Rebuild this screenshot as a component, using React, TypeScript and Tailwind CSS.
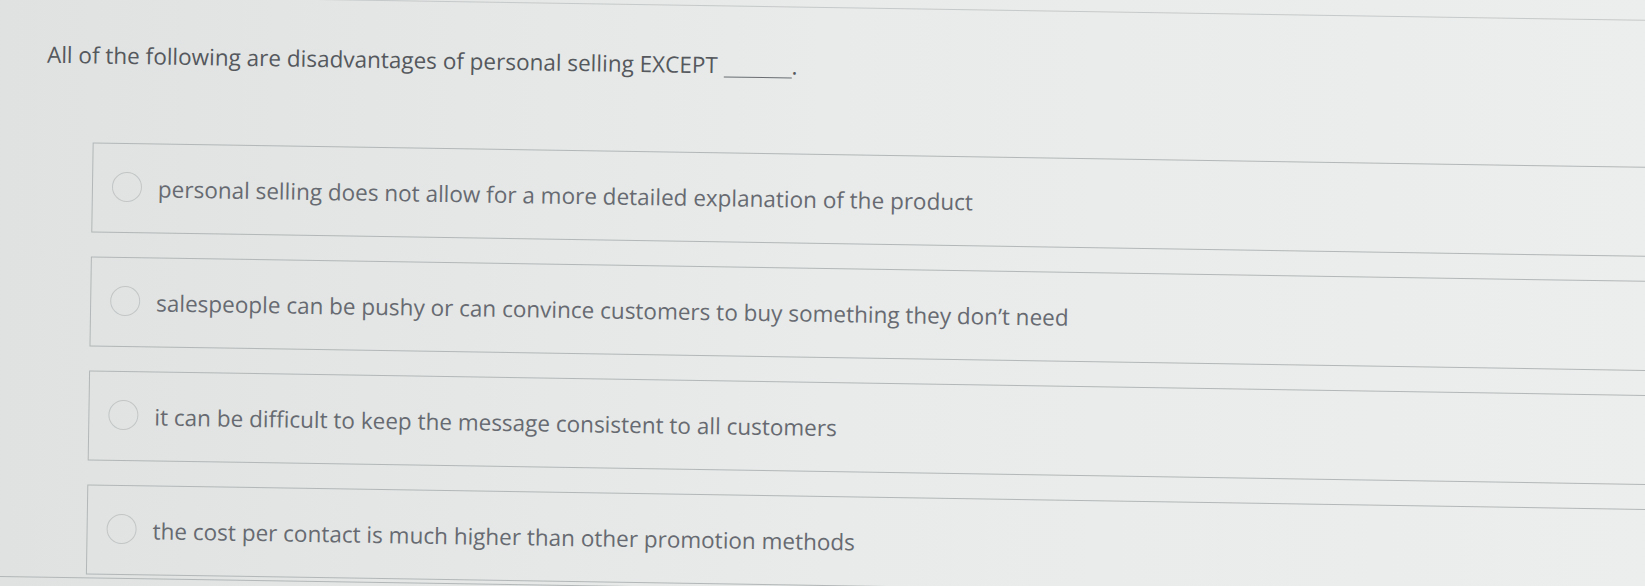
import React from 'react';

const options = [
  'personal selling does not allow for a more detailed explanation of the product',
  'salespeople can be pushy or can convince customers to buy something they don\u2019t need',
  'it can be difficult to keep the message consistent to all customers',
  'the cost per contact is much higher than other promotion methods',
];

const Option: React.FC<{ label: string }> = ({ label }) => (
  <div className="flex h-[90px] w-[1700px] items-center border-[1.5px] border-[#b3b7b7] pl-[19px]">
    <span className="mb-[2px] h-[30px] w-[30px] shrink-0 rounded-full border-[1.5px] border-[#c3c6c6]" />
    <span className="ml-[16px] mt-[2px] text-[22.5px] leading-[30px] text-[#676a71]">{label}</span>
  </div>
);

const App: React.FC = () => {
  return (
    <div
      className="h-[586px] w-full overflow-hidden bg-linear-to-r from-[#dfe2e1] via-[#e8ebea] to-[#eceeed]"
      style={{ fontFamily: '"Open Sans", "Liberation Sans", sans-serif' }}
    >
      <div className="origin-top-left rotate-[0.9deg]">
        <div className="-mt-[6px] h-0 w-[2000px] border-t-[1.5px] border-[#c6c9c9]" />
        <p className="mt-[44px] pl-[48px] text-[22.5px] leading-[30px] text-[#55585d]">
          All of the following are disadvantages of personal selling EXCEPT{' '}
          <span className="inline-block w-[68px] border-b-[1.5px] border-[#6a6d71] align-[-4px]" />.
        </p>

        <div className="ml-[95px] mt-[72px] flex flex-col gap-[24px]">
          {options.map((o) => (
            <Option key={o} label={o} />
          ))}
        </div>

        <div className="mt-[3px] h-0 w-[2000px] border-t-[1.5px] border-[#b3b7b7]" />
      </div>
    </div>
  );
};

export default App;
